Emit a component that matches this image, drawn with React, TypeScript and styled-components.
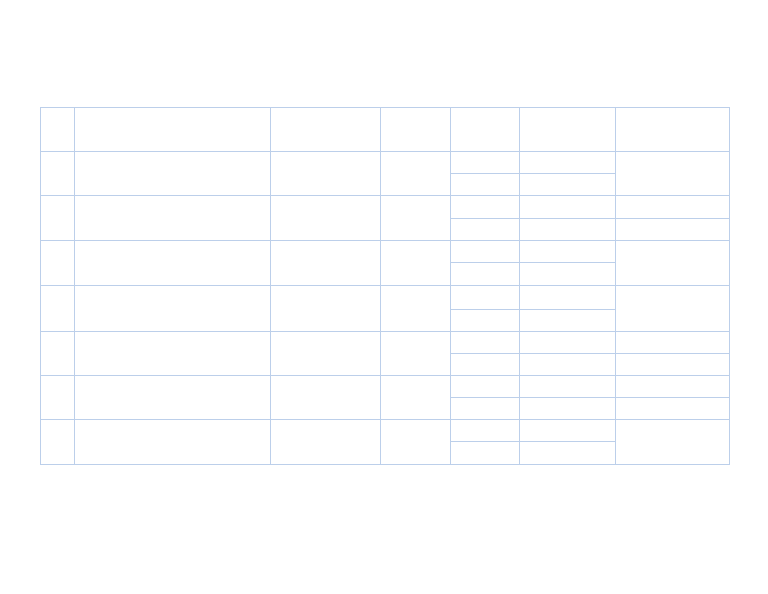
import styled, { createGlobalStyle } from 'styled-components';

const GlobalStyle = createGlobalStyle`
  html, body {
    margin: 0;
    padding: 0;
    background: #ffffff;
    font-family: "Liberation Sans", Arial, sans-serif;
  }
`;

const LINE = '#bccfea';

type Row = { heights: [number, number]; splitLast: boolean };

const rows: Row[] = [
  { heights: [22, 22], splitLast: false },
  { heights: [23, 22], splitLast: true },
  { heights: [22, 23], splitLast: false },
  { heights: [24, 22], splitLast: false },
  { heights: [22, 22], splitLast: true },
  { heights: [22, 22], splitLast: true },
  { heights: [22, 23], splitLast: false },
];

const colWidths = [34, 196, 110, 70, 69, 96, 114];

const App = () => {
  return (
    <StPage>
      <GlobalStyle />
      <StTable>
        <colgroup>
          {colWidths.map((w, i) => (
            <col key={i} style={{ width: w }} />
          ))}
        </colgroup>
        <thead>
          <StRow $h={44}>
            {colWidths.map((_, i) => (
              <StHead key={i} />
            ))}
          </StRow>
        </thead>
        <tbody>
          {rows.map((row, i) => [
            <StRow key={`${i}a`} $h={row.heights[0]}>
              <StCell rowSpan={2} />
              <StCell rowSpan={2} />
              <StCell rowSpan={2} />
              <StCell rowSpan={2} />
              <StCell />
              <StCell />
              <StCell rowSpan={row.splitLast ? 1 : 2} />
            </StRow>,
            <StRow key={`${i}b`} $h={row.heights[1]}>
              <StCell />
              <StCell />
              {row.splitLast && <StCell />}
            </StRow>,
          ])}
        </tbody>
      </StTable>
    </StPage>
  );
};

export default App;

const StPage = styled.main`
  width: 768px;
  height: 594px;
  padding: 107px 0 0 40px;
  box-sizing: border-box;
`;

const StTable = styled.table`
  border-collapse: collapse;
  table-layout: fixed;
  width: 690px;
  border: 1px solid ${LINE};
`;

const StRow = styled.tr<{ $h: number }>`
  height: ${({ $h }) => $h}px;
`;

const StHead = styled.th`
  border: 1px solid ${LINE};
  padding: 0;
  font-weight: normal;
`;

const StCell = styled.td`
  border: 1px solid ${LINE};
  padding: 0;
`;
